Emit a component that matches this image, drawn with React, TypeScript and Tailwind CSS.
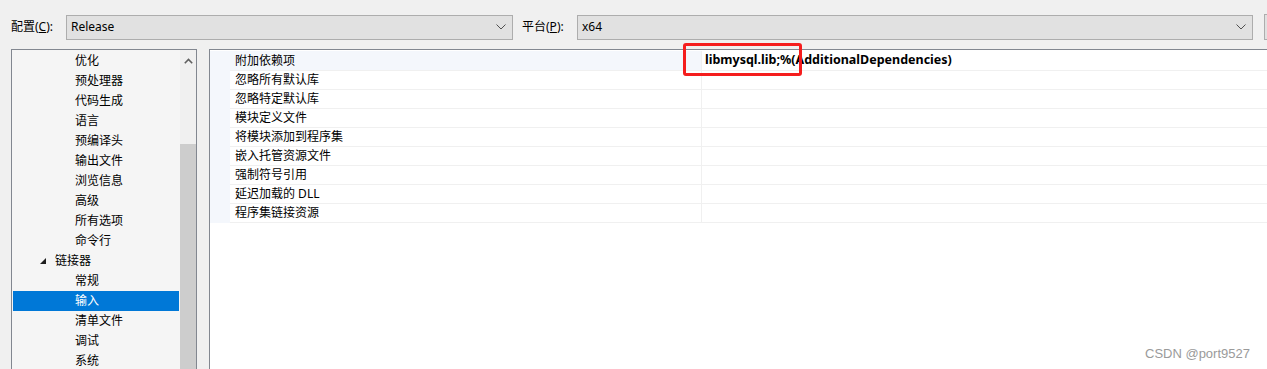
const treeItems = [
  { label: "优化", level: 2 },
  { label: "预处理器", level: 2 },
  { label: "代码生成", level: 2 },
  { label: "语言", level: 2 },
  { label: "预编译头", level: 2 },
  { label: "输出文件", level: 2 },
  { label: "浏览信息", level: 2 },
  { label: "高级", level: 2 },
  { label: "所有选项", level: 2 },
  { label: "命令行", level: 2 },
  { label: "链接器", level: 1, expanded: true },
  { label: "常规", level: 2 },
  { label: "输入", level: 2, selected: true },
  { label: "清单文件", level: 2 },
  { label: "调试", level: 2 },
  { label: "系统", level: 2 },
];

const props = [
  { name: "附加依赖项", value: "libmysql.lib;%(AdditionalDependencies)" },
  { name: "忽略所有默认库", value: "" },
  { name: "忽略特定默认库", value: "" },
  { name: "模块定义文件", value: "" },
  { name: "将模块添加到程序集", value: "" },
  { name: "嵌入托管资源文件", value: "" },
  { name: "强制符号引用", value: "" },
  { name: "延迟加载的 DLL", value: "" },
  { name: "程序集链接资源", value: "" },
];

const font = "font-['Noto_Sans','Noto_Sans_CJK_SC',sans-serif]";

function ChevronDown() {
  return (
    <svg width="10" height="6" viewBox="0 0 10 6" className="shrink-0">
      <path d="M0.5 0.5 L5 5 L9.5 0.5" fill="none" stroke="#505050" strokeWidth="1" />
    </svg>
  );
}

function Combo({ value, width }: { value: string; width: string }) {
  return (
    <div
      className={`flex h-[25px] ${width} shrink-0 items-center justify-between border border-[#adadad] bg-[#e1e1e1] pl-[4px] pr-[6px] text-[12px] text-black`}
    >
      <span>{value}</span>
      <ChevronDown />
    </div>
  );
}

export default function App() {
  return (
    <div className={`relative h-[369px] w-[1267px] overflow-hidden bg-[#f0f0f0] ${font}`}>
      {/* Top bar */}
      <div className="flex items-center overflow-hidden pl-[11px] pt-[14px]">
        <span className="w-[55px] shrink-0 text-[12px] text-black">
          配置(<span className="underline">C</span>):
        </span>
        <Combo value="Release" width="w-[447px]" />
        <span className="ml-[9px] w-[55px] shrink-0 text-[12px] text-black">
          平台(<span className="underline">P</span>):
        </span>
        <Combo value="x64" width="w-[676px]" />
        <div className="ml-[11px] h-[26px] w-[20px] shrink-0 border border-[#adadad] bg-[#e1e1e1]" />
      </div>

      {/* Panels */}
      <div className="mt-[9px] flex pl-[11px]">
        {/* Tree */}
        <div className="flex h-[330px] w-[186px] shrink-0 border border-[#828790] bg-[#f5f5f5]">
          <div className="flex-1 pt-[1px]">
            {treeItems.map((item) => (
              <div
                key={item.label}
                className={`mx-[1px] flex h-[20px] items-center text-[12px] ${
                  item.selected ? "bg-[#0078d7] text-white" : "text-black"
                } ${item.level === 1 ? "pl-[27px]" : "pl-[62px]"}`}
              >
                {item.expanded && (
                  <svg width="6" height="6" viewBox="0 0 6 6" className="mr-[9px]">
                    <polygon points="6,0 6,6 0,6" fill="#1e1e1e" />
                  </svg>
                )}
                <span>{item.label}</span>
              </div>
            ))}
          </div>
          {/* Scrollbar */}
          <div className="flex w-[16px] shrink-0 flex-col bg-[#f0f0f0]">
            <div className="flex h-[20px] items-center justify-center pt-[1px]">
              <svg width="9" height="6" viewBox="0 0 9 6">
                <path d="M0.8 5.2 L4.5 1.5 L8.2 5.2" fill="none" stroke="#606060" strokeWidth="1.6" />
              </svg>
            </div>
            <div className="mt-[74px] flex-1 bg-[#cdcdcd]" />
          </div>
        </div>

        {/* Property grid */}
        <div className="relative ml-[12px] h-[330px] flex-1 border-l border-t border-[#828790] bg-white">
          <div className="flex flex-col">
            {props.map((p, i) => (
              <div key={p.name} className={`flex ${i === 0 ? "h-[21px] pt-[1px]" : "h-[19px]"}`}>
                <div className="w-[20px] shrink-0 bg-[#f4f7fc]" />
                <div
                  className={`flex w-[472px] shrink-0 items-center border-b border-r border-[#f0f0f0] pl-[5px] text-[12px] text-black ${
                    i === 0 ? "bg-[#f4f7fc]" : "bg-white"
                  }`}
                >
                  {p.name}
                </div>
                <div className="flex flex-1 items-center border-b border-[#f0f0f0] pl-[3px] text-[12.5px] font-bold text-black">
                  {p.value}
                </div>
              </div>
            ))}
          </div>
          {/* Red highlight */}
          <div className="absolute left-[473px] top-[-7px] h-[33px] w-[119px] rounded-[3px] border-[3px] border-[#f51d1d]" />
        </div>
      </div>

      {/* Watermark */}
      <div className="pointer-events-none absolute left-[1145px] top-[344px] font-['Liberation_Sans',sans-serif] text-[13px] text-[#9a9a9a]">
        CSDN @port9527
      </div>
    </div>
  );
}
